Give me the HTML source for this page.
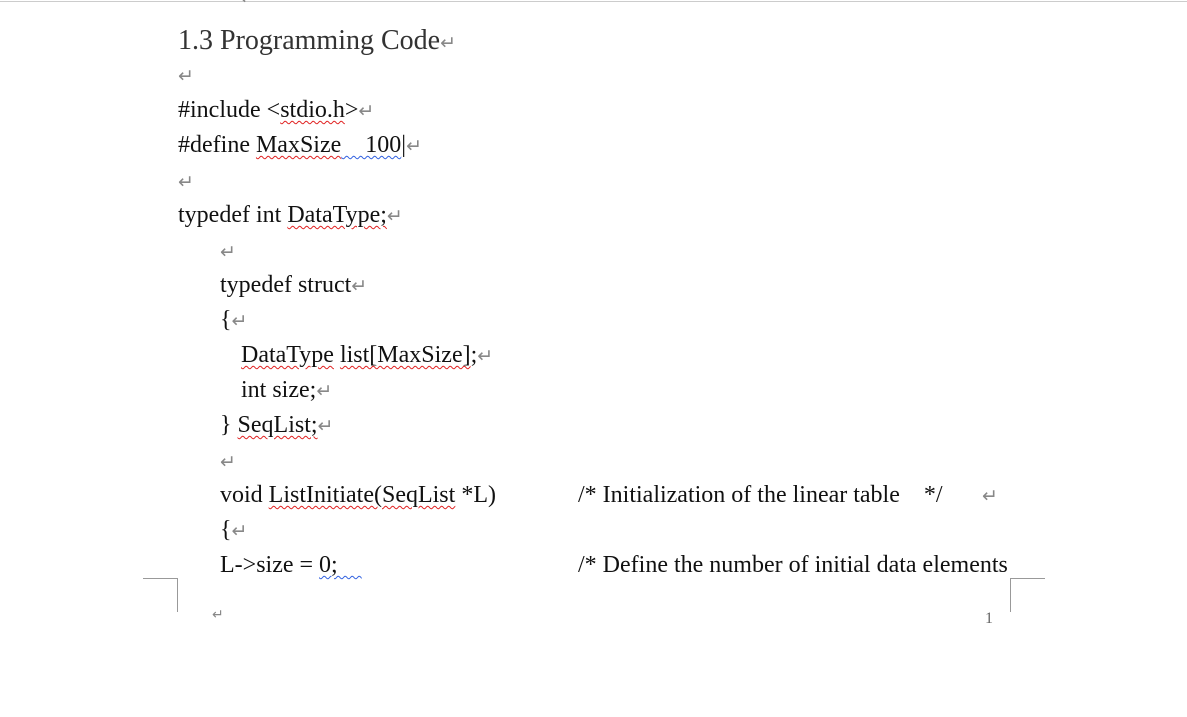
<!DOCTYPE html>
<html><head><meta charset="utf-8"><style>
body{margin:0;width:1187px;height:717px;background:#fff;position:relative;overflow:hidden;font-family:"Liberation Serif",serif;}
.t{position:absolute;font-size:24px;line-height:24px;color:#111;white-space:pre;}
.r{color:#888;font-family:"DejaVu Sans",sans-serif;font-size:19px;}
.w{text-decoration:underline wavy #e02020;text-decoration-thickness:1px;text-underline-offset:3px;}
.b{text-decoration:underline wavy #3060e0;text-decoration-thickness:1px;text-underline-offset:3px;}
.l{position:absolute;background:#999;}
</style></head><body>
<div class="l" style="left:0;top:1px;width:1187px;height:1px;background:#ccc"></div>
<div class="t r" style="left:240px;top:-14px">↵</div>
<div class="t" style="left:178px;top:26px;font-size:28px;line-height:30px;color:#333">1.3 Programming Code<span class="r">↵</span></div>
<div class="t r" style="left:178px;top:64px">↵</div>
<div class="t" style="left:178px;top:98px">#include &lt;<span class="w">stdio.h</span>&gt;<span class="r">↵</span></div>
<div class="t" style="left:178px;top:133px">#define <span class="w">MaxSize</span><span class="b">    100</span>|<span class="r">↵</span></div>
<div class="t r" style="left:178px;top:170px">↵</div>
<div class="t" style="left:178px;top:203px">typedef int <span class="w">DataType;</span><span class="r">↵</span></div>
<div class="t r" style="left:220px;top:240px">↵</div>
<div class="t" style="left:220px;top:273px">typedef struct<span class="r">↵</span></div>
<div class="t" style="left:220px;top:308px">{<span class="r">↵</span></div>
<div class="t" style="left:241px;top:343px"><span class="w">DataType</span> <span class="w">list[MaxSize]</span>;<span class="r">↵</span></div>
<div class="t" style="left:241px;top:378px">int size;<span class="r">↵</span></div>
<div class="t" style="left:220px;top:413px">} <span class="w">SeqList;</span><span class="r">↵</span></div>
<div class="t r" style="left:220px;top:450px">↵</div>
<div class="t" style="left:220px;top:483px">void <span class="w">ListInitiate(SeqList</span> *L)</div>
<div class="t" style="left:578px;top:483px">/* Initialization of the linear table    */</div>
<div class="t r" style="left:982px;top:484px">↵</div>
<div class="t" style="left:220px;top:518px">{<span class="r">↵</span></div>
<div class="t" style="left:220px;top:553px">L-&gt;size = <span class="b">0;    </span></div>
<div class="t" style="left:578px;top:553px">/* Define the number of initial data elements</div>
<div class="l" style="left:143px;top:578px;width:35px;height:1px"></div>
<div class="l" style="left:177px;top:578px;width:1px;height:34px"></div>
<div class="l" style="left:1010px;top:578px;width:35px;height:1px"></div>
<div class="l" style="left:1010px;top:578px;width:1px;height:34px"></div>
<div class="t r" style="left:212px;top:603px;font-size:14px">↵</div>
<div class="t" style="left:985px;top:607px;font-size:16px;color:#666">1</div>
</body></html>
